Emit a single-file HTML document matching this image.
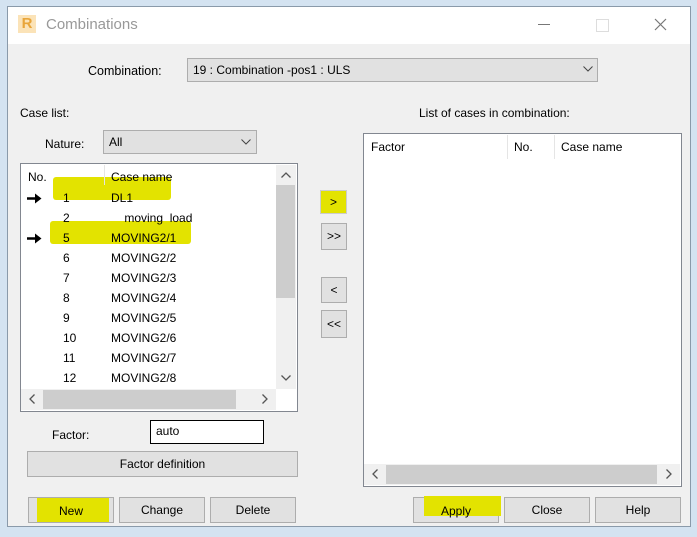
<!DOCTYPE html>
<html><head><style>
body{margin:0;width:697px;height:537px;background:#d4e3f1;position:relative;overflow:hidden;font-family:"Liberation Sans",sans-serif;font-size:12px;color:#000}
.a{position:absolute}
.win{left:7px;top:6px;width:684px;height:521px;background:#f0f0f0;border:1px solid #8a9aaa;box-sizing:border-box}
.title{left:8px;top:7px;width:682px;height:37px;background:#fff}
.btn{position:absolute;background:#e1e1e1;border:1px solid #adadad;box-sizing:border-box;text-align:center;font-size:12px}
.dd{position:absolute;background:#e1e1e1;border:1px solid #adadad;box-sizing:border-box;padding-left:5px}
.hl{position:absolute;background:#e3e300}
.sb{position:absolute;background:#f0f0f0}
.th{position:absolute;background:#cdcdcd}
</style></head><body>
<div class="a win"></div>
<div class="a title"></div>
<div class="a" style="left:18px;top:15px;width:18px;height:18px;background:#fbe3b8;color:#e8a53a;font-weight:bold;font-size:15px;line-height:18px;text-align:center">R</div>
<div class="a" style="left:46px;top:16px;font-size:15px;color:#999">Combinations</div>
<div class="a" style="left:538px;top:24px;width:12px;height:1px;background:#777"></div>
<div class="a" style="left:596px;top:19px;width:11px;height:11px;border:1px solid #ddd"></div>
<svg class="a" style="left:654px;top:18px" width="13" height="13"><path d="M1 1L12 12M12 1L1 12" stroke="#777" stroke-width="1.2"/></svg>

<div class="a" style="left:88px;top:64px;font-size:12.5px">Combination:</div>
<div class="dd" style="left:187px;top:58px;width:411px;height:24px;line-height:22px">19 : Combination -pos1 : ULS</div>
<svg class="a" style="left:583px;top:66px" width="10" height="6"><path d="M0.5 0.5L5 5L9.5 0.5" stroke="#444" fill="none"/></svg>

<div class="a" style="left:20px;top:106px">Case list:</div>
<div class="a" style="left:419px;top:106px">List of cases in combination:</div>
<div class="a" style="left:45px;top:137px">Nature:</div>
<div class="dd" style="left:103px;top:130px;width:154px;height:24px;line-height:22px">All</div>
<svg class="a" style="left:241px;top:139px" width="10" height="6"><path d="M0.5 0.5L5 5L9.5 0.5" stroke="#444" fill="none"/></svg>

<!-- left list -->
<div class="a" style="left:20px;top:163px;width:278px;height:249px;background:#fff;border:1px solid #828790;box-sizing:border-box"></div>
<div class="hl" style="left:53px;top:177px;width:118px;height:23px;border-radius:3px"></div>
<div class="hl" style="left:50px;top:221px;width:141px;height:23px;border-radius:3px"></div>
<div class="a" style="left:104px;top:165px;width:1px;height:20px;background:#e5e5e5"></div>
<div class="a" style="left:28px;top:170px">No.</div>
<div class="a" style="left:111px;top:170px">Case name</div>
<svg class="a" style="left:27px;top:193px" width="15" height="11"><path d="M0 5.5H9" stroke="#000" stroke-width="2.5"/><path d="M8 0.5L14.5 5.5L8 10.5Z" fill="#000"/></svg>
<svg class="a" style="left:27px;top:233px" width="15" height="11"><path d="M0 5.5H9" stroke="#000" stroke-width="2.5"/><path d="M8 0.5L14.5 5.5L8 10.5Z" fill="#000"/></svg>
<div class="a" style="left:63px;top:188px;line-height:20px">1<br>2<br>5<br>6<br>7<br>8<br>9<br>10<br>11<br>12</div>
<div class="a" style="left:111px;top:188px;line-height:20px">DL1<br>&nbsp;&nbsp;&nbsp;&nbsp;moving&nbsp; load<br>MOVING2/1<br>MOVING2/2<br>MOVING2/3<br>MOVING2/4<br>MOVING2/5<br>MOVING2/6<br>MOVING2/7<br>MOVING2/8</div>
<div class="sb" style="left:276px;top:165px;width:20px;height:224px"></div>
<div class="th" style="left:276px;top:185px;width:19px;height:113px"></div>
<svg class="a" style="left:281px;top:172px" width="10" height="6"><path d="M0.5 5.5L5 1L9.5 5.5" stroke="#555" fill="none" stroke-width="1.3"/></svg>
<svg class="a" style="left:281px;top:375px" width="10" height="6"><path d="M0.5 0.5L5 5L9.5 0.5" stroke="#555" fill="none" stroke-width="1.3"/></svg>
<div class="sb" style="left:21px;top:389px;width:255px;height:21px"></div>
<div class="th" style="left:43px;top:390px;width:193px;height:19px"></div>
<svg class="a" style="left:29px;top:394px" width="6" height="10"><path d="M5.5 0.5L1 5L5.5 9.5" stroke="#555" fill="none" stroke-width="1.3"/></svg>
<svg class="a" style="left:262px;top:394px" width="6" height="10"><path d="M0.5 0.5L5 5L0.5 9.5" stroke="#555" fill="none" stroke-width="1.3"/></svg>

<div class="a" style="left:52px;top:428px">Factor:</div>
<div class="a" style="left:150px;top:420px;width:114px;height:24px;background:#fff;border:1px solid #000;box-sizing:border-box;padding:3px 5px">auto</div>
<div class="btn" style="left:27px;top:451px;width:271px;height:26px;line-height:24px">Factor definition</div>

<!-- arrow buttons -->
<div class="btn" style="left:320px;top:190px;width:27px;height:24px;line-height:22px;background:#e3e300;border-color:#ccc">&gt;</div>
<div class="btn" style="left:321px;top:223px;width:26px;height:27px;line-height:25px">&gt;&gt;</div>
<div class="btn" style="left:321px;top:277px;width:26px;height:26px;line-height:24px">&lt;</div>
<div class="btn" style="left:321px;top:310px;width:26px;height:28px;line-height:26px">&lt;&lt;</div>

<!-- right list -->
<div class="a" style="left:363px;top:133px;width:319px;height:354px;background:#fff;border:1px solid #828790;box-sizing:border-box"></div>
<div class="a" style="left:507px;top:135px;width:1px;height:24px;background:#e5e5e5"></div>
<div class="a" style="left:554px;top:135px;width:1px;height:24px;background:#e5e5e5"></div>
<div class="a" style="left:371px;top:140px">Factor</div>
<div class="a" style="left:514px;top:140px">No.</div>
<div class="a" style="left:561px;top:140px">Case name</div>
<div class="sb" style="left:364px;top:464px;width:316px;height:21px"></div>
<div class="th" style="left:386px;top:465px;width:271px;height:19px"></div>
<svg class="a" style="left:372px;top:469px" width="6" height="10"><path d="M5.5 0.5L1 5L5.5 9.5" stroke="#555" fill="none" stroke-width="1.3"/></svg>
<svg class="a" style="left:666px;top:469px" width="6" height="10"><path d="M0.5 0.5L5 5L0.5 9.5" stroke="#555" fill="none" stroke-width="1.3"/></svg>

<!-- bottom buttons -->
<div class="btn" style="left:28px;top:497px;width:86px;height:26px"></div>
<div class="hl" style="left:37px;top:498px;width:72px;height:24px"></div>
<div class="a" style="left:28px;top:504px;width:86px;text-align:center">New</div>
<div class="btn" style="left:119px;top:497px;width:86px;height:26px;line-height:24px">Change</div>
<div class="btn" style="left:210px;top:497px;width:86px;height:26px;line-height:24px">Delete</div>
<div class="btn" style="left:413px;top:497px;width:86px;height:26px"></div>
<div class="hl" style="left:424px;top:496px;width:77px;height:20px"></div>
<div class="a" style="left:413px;top:504px;width:86px;text-align:center">Apply</div>
<div class="btn" style="left:504px;top:497px;width:86px;height:26px;line-height:24px">Close</div>
<div class="btn" style="left:595px;top:497px;width:86px;height:26px;line-height:24px">Help</div>
</body></html>
